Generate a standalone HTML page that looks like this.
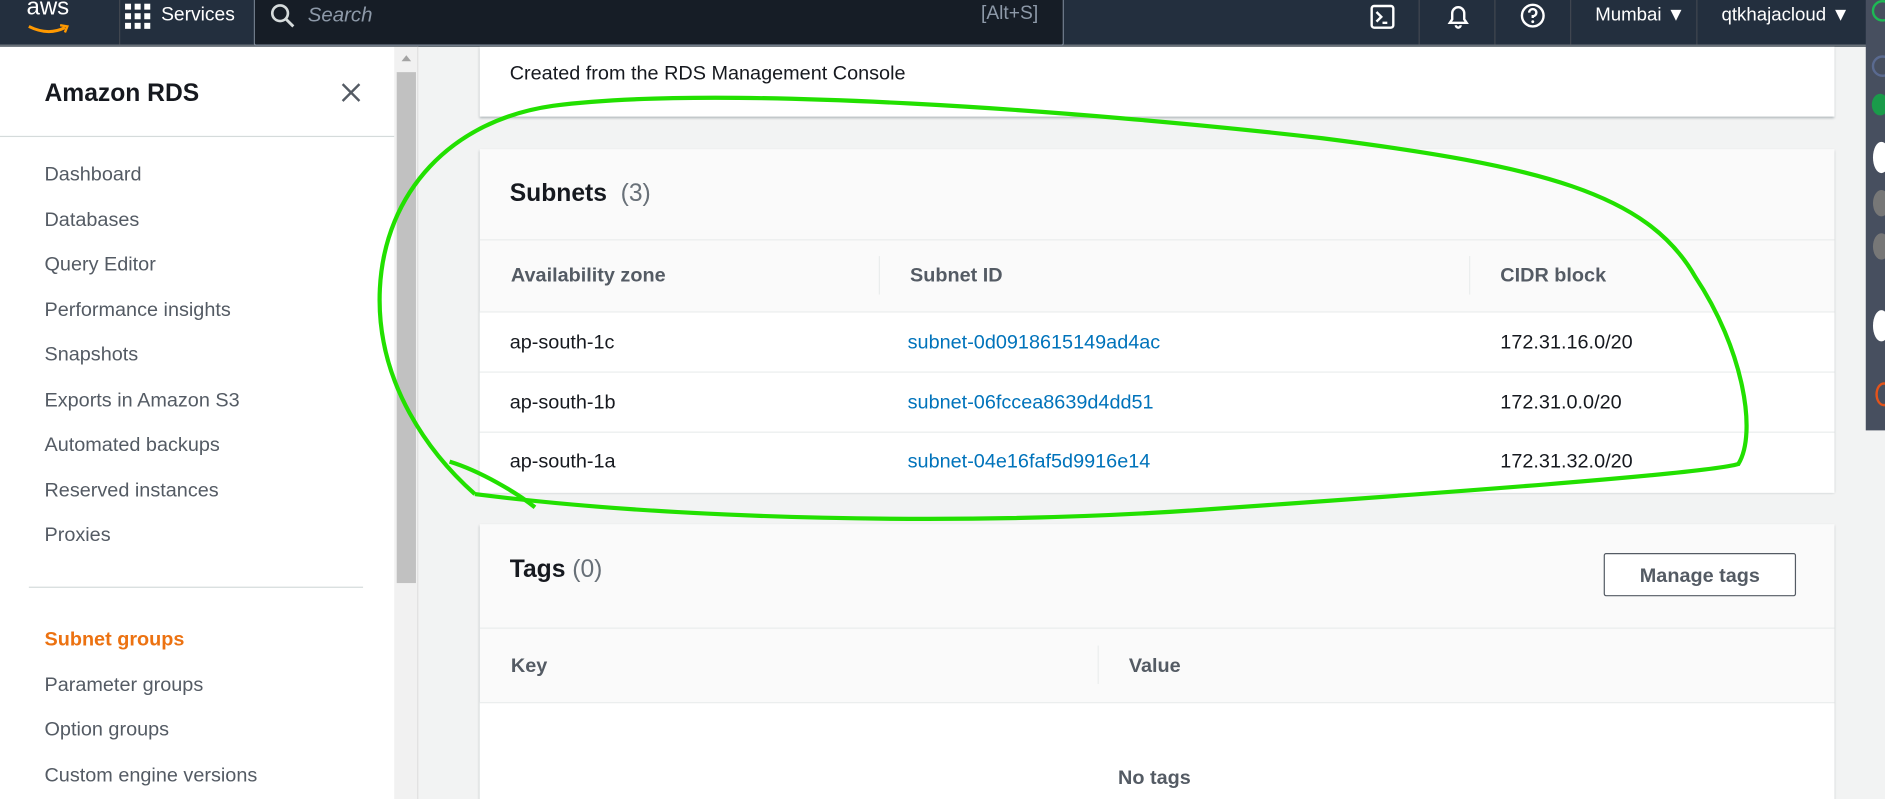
<!DOCTYPE html>
<html><head><meta charset="utf-8"><style>
html,body{margin:0;padding:0;width:1885px;height:799px;overflow:hidden;background:#f2f3f3;}
#s{position:absolute;left:0;top:0;width:1568px;height:665px;transform:scale(1.20217);transform-origin:0 0;font-family:"Liberation Sans",sans-serif;background:#f2f3f3;overflow:hidden}
.a{position:absolute}
.top{left:0;top:0;width:1568px;height:37px;background:#232f3e;border-bottom:2px solid #687078}
.nav{left:37px;font-size:16.5px;color:#545b64}
.card{background:#fff;box-shadow:0 1px 2px rgba(0,28,36,.3);left:399px;width:1127px}
.t{font-size:16.5px;color:#16191f}
.l{font-size:16.5px;color:#0073bb}
.h{font-size:16.5px;font-weight:bold;color:#545b64}
.w{color:#fff;font-size:15.5px}
.dv{top:0;width:1px;height:37px;background:#414750}
</style></head><body><div id="s">
<div class="a top"></div>
<div class="a" style="left:22px;top:-5px;color:#fff;font-size:20px;">aws</div>
<svg class="a" style="left:22px;top:20px" width="36" height="10"><path d="M2 2 Q18 10 32 3" stroke="#ff9900" stroke-width="2.5" fill="none"/><path d="M28 1 L34 2 L32 7" stroke="#ff9900" stroke-width="2" fill="none"/></svg>
<div class="a dv" style="left:99px"></div>
<svg class="a" style="left:104px;top:3px" width="22" height="22" fill="#fff"><rect x="0" y="0" width="5" height="5"/><rect x="8" y="0" width="5" height="5"/><rect x="16" y="0" width="5" height="5"/><rect x="0" y="8" width="5" height="5"/><rect x="8" y="8" width="5" height="5"/><rect x="16" y="8" width="5" height="5"/><rect x="0" y="16" width="5" height="5"/><rect x="8" y="16" width="5" height="5"/><rect x="16" y="16" width="5" height="5"/></svg>
<div class="a w" style="left:134px;top:4px;font-size:16px">Services</div>
<div class="a" style="left:211px;top:-1px;width:672px;height:38px;background:#161d26;border:1px solid #7d8998;border-top:none;border-radius:0 0 2px 2px"></div>
<svg class="a" style="left:224px;top:2px" width="22" height="22"><circle cx="9" cy="9" r="6.5" stroke="#d5dbdb" stroke-width="2.2" fill="none"/><path d="M14 14 L20 20" stroke="#d5dbdb" stroke-width="2.4"/></svg>
<div class="a" style="left:256px;top:3px;color:#8d99a8;font-size:17px;font-style:italic">Search</div>
<div class="a" style="left:816px;top:3px;color:#8d99a8;font-size:16px">[Alt+S]</div>
<svg class="a" style="left:1139px;top:3px" width="22" height="22"><rect x="2" y="2" width="18" height="18" rx="2" stroke="#fff" stroke-width="2" fill="none"/><path d="M6 7 L10 11 L6 15 M11 16 H15" stroke="#fff" stroke-width="2" fill="none"/></svg>
<div class="a dv" style="left:1180px"></div>
<svg class="a" style="left:1202px;top:2px" width="22" height="24"><path d="M4 17 H18 L16 14 V9 A5 5 0 0 0 6 9 V14 Z" stroke="#fff" stroke-width="2" fill="none"/><path d="M9 19 A2 2 0 0 0 13 19" stroke="#fff" stroke-width="2" fill="none"/></svg>
<div class="a dv" style="left:1243px"></div>
<svg class="a" style="left:1264px;top:2px" width="22" height="22"><circle cx="11" cy="11" r="9" stroke="#fff" stroke-width="2" fill="none"/><path d="M8 8.5 A3 3 0 1 1 11 11.5 V13" stroke="#fff" stroke-width="2" fill="none"/><circle cx="11" cy="16" r="1.2" fill="#fff"/></svg>
<div class="a dv" style="left:1306px"></div>
<div class="a w" style="left:1327px;top:4px">Mumbai ▼</div>
<div class="a dv" style="left:1411px"></div>
<div class="a w" style="left:1432px;top:4px">qtkhajacloud ▼</div>
<div class="a" style="left:1552px;top:0;width:16px;height:358px;background:#474f5f"></div>
<div class="a" style="left:1557px;top:0;width:14px;height:14px;border-radius:50%;border:2px solid #1db954"></div>
<div class="a" style="left:1557px;top:46px;width:14px;height:14px;border-radius:50%;border:2px solid #5a6a90"></div>
<div class="a" style="left:1557px;top:78px;width:14px;height:18px;border-radius:50%;background:#1a9b4a"></div>
<div class="a" style="left:1558px;top:118px;width:14px;height:26px;border-radius:50%;background:#fff"></div>
<div class="a" style="left:1558px;top:158px;width:14px;height:22px;border-radius:50%;background:#777"></div>
<div class="a" style="left:1558px;top:194px;width:14px;height:22px;border-radius:50%;background:#777"></div>
<div class="a" style="left:1558px;top:258px;width:14px;height:26px;border-radius:50%;background:#fff"></div>
<div class="a" style="left:1560px;top:318px;width:10px;height:16px;border-radius:50%;border:2px solid #e5531a"></div>

<div class="a" style="left:0;top:39px;width:328px;height:626px;background:#fff"></div>
<div class="a" style="left:37px;top:66px;font-size:20.5px;font-weight:bold;color:#16191f">Amazon RDS</div>
<svg class="a" style="left:283px;top:68px" width="18" height="18"><path d="M2 2 L16 16 M16 2 L2 16" stroke="#545b64" stroke-width="2"/></svg>
<div class="a" style="left:0;top:113px;width:328px;height:1px;background:#d5dbdb"></div>
<div class="a nav" style="top:136px">Dashboard</div>
<div class="a nav" style="top:174px">Databases</div>
<div class="a nav" style="top:211px">Query Editor</div>
<div class="a nav" style="top:249px">Performance insights</div>
<div class="a nav" style="top:286px">Snapshots</div>
<div class="a nav" style="top:324px">Exports in Amazon S3</div>
<div class="a nav" style="top:361px">Automated backups</div>
<div class="a nav" style="top:399px">Reserved instances</div>
<div class="a nav" style="top:436px">Proxies</div>
<div class="a" style="left:24px;top:488px;width:278px;height:1px;background:#d5dbdb"></div>
<div class="a nav" style="top:523px;color:#ec7211;font-weight:bold">Subnet groups</div>
<div class="a nav" style="top:561px">Parameter groups</div>
<div class="a nav" style="top:598px">Option groups</div>
<div class="a nav" style="top:636px">Custom engine versions</div>
<div class="a" style="left:328px;top:39px;width:19px;height:626px;background:#f1f1f1;border-right:1px solid #e0e0e0"></div>
<div class="a" style="left:330px;top:60px;width:16px;height:425px;background:#c1c1c1"></div>
<div class="a" style="left:334px;top:46px;width:0;height:0;border:4px solid transparent;border-bottom:5px solid #a3a3a3;border-top:none"></div>

<div class="a card" style="top:39px;height:58px"></div>
<div class="a t" style="left:424px;top:52px">Created from the RDS Management Console</div>

<div class="a card" style="top:124px;height:285px;background:#fafafa"></div>
<div class="a" style="left:424px;top:149px;font-size:20.5px;font-weight:bold;color:#16191f">Subnets <span style="color:#687078;font-weight:normal">&nbsp;(3)</span></div>
<div class="a" style="left:399px;top:199px;width:1127px;height:1px;background:#eaeded"></div>
<div class="a h" style="left:425px;top:220px">Availability zone</div>
<div class="a" style="left:731px;top:213px;width:1px;height:32px;background:#eaeded"></div>
<div class="a h" style="left:757px;top:220px">Subnet ID</div>
<div class="a" style="left:1222px;top:213px;width:1px;height:32px;background:#eaeded"></div>
<div class="a h" style="left:1248px;top:220px">CIDR block</div>
<div class="a" style="left:399px;top:259px;width:1127px;height:150px;background:#fff;border-top:1px solid #eaeded"></div>
<div class="a" style="left:399px;top:309px;width:1127px;height:1px;background:#eaeded"></div>
<div class="a" style="left:399px;top:359px;width:1127px;height:1px;background:#eaeded"></div>
<div class="a t" style="left:424px;top:276px">ap-south-1c</div>
<div class="a l" style="left:755px;top:276px">subnet-0d0918615149ad4ac</div>
<div class="a t" style="left:1248px;top:276px">172.31.16.0/20</div>
<div class="a t" style="left:424px;top:326px">ap-south-1b</div>
<div class="a l" style="left:755px;top:326px">subnet-06fccea8639d4dd51</div>
<div class="a t" style="left:1248px;top:326px">172.31.0.0/20</div>
<div class="a t" style="left:424px;top:375px">ap-south-1a</div>
<div class="a l" style="left:755px;top:375px">subnet-04e16faf5d9916e14</div>
<div class="a t" style="left:1248px;top:375px">172.31.32.0/20</div>

<div class="a card" style="top:436px;height:240px;background:#fafafa"></div>
<div class="a" style="left:424px;top:462px;font-size:20.5px;font-weight:bold;color:#16191f">Tags <span style="color:#687078;font-weight:normal">(0)</span></div>
<div class="a" style="left:1334px;top:460px;width:158px;height:34px;border:1px solid #545b64;border-radius:2px;background:#fff;font-size:16.5px;font-weight:bold;color:#545b64;text-align:center;line-height:36px">Manage tags</div>
<div class="a" style="left:399px;top:522px;width:1127px;height:1px;background:#eaeded"></div>
<div class="a h" style="left:425px;top:545px">Key</div>
<div class="a" style="left:913px;top:537px;width:1px;height:32px;background:#eaeded"></div>
<div class="a h" style="left:939px;top:545px">Value</div>
<div class="a" style="left:399px;top:584px;width:1127px;height:90px;background:#fff;border-top:1px solid #eaeded"></div>
<div class="a" style="left:930px;top:638px;font-size:16.5px;font-weight:bold;color:#545b64">No tags</div>

<svg class="a" style="left:0;top:0" width="1568" height="665"><path d="M395 411 C 360 380 312 320 316 240 C 320 160 375 100 460 88 C 600 70 900 92 1100 115 C 1280 138 1370 160 1410 230 C 1450 290 1462 360 1446 386 C 1420 394 1200 410 1000 424 C 800 438 560 432 395 411" stroke="#22e000" stroke-width="3.5" fill="none"/><path d="M374 384 C 400 392 430 410 445 422" stroke="#22e000" stroke-width="3.5" fill="none"/></svg>
</div></body></html>
